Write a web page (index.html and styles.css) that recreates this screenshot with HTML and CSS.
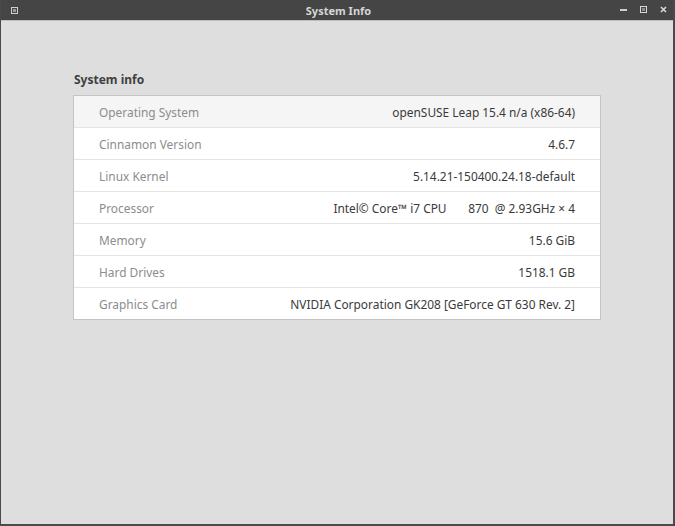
FILE: index.html
```html
<!DOCTYPE html>
<html lang="en">
<head>
    <meta charset="UTF-8">
    <title>System Info</title>
    <link rel="stylesheet" href="styles.css">
</head>
<body>
    <div class="window">
        <div class="titlebar">
            <span class="menu-btn"><svg width="7" height="7" viewBox="0 0 7 7"><rect x="0.5" y="0.5" width="6" height="6" fill="none" stroke="#cfcfcf"/><rect x="2" y="2" width="3" height="3" fill="#9a9a9a"/></svg></span>
            <span class="title">System Info</span>
            <span class="controls">
                <svg width="8" height="8" viewBox="0 0 8 8"><rect x="0" y="3" width="7" height="2" fill="#cfcfcf"/></svg>
                <svg width="8" height="8" viewBox="0 0 8 8"><rect x="0.5" y="0.5" width="6" height="6" fill="none" stroke="#d8d8d8"/><rect x="2" y="2" width="3" height="3" fill="#8a8a8a"/></svg>
                <svg width="8" height="8" viewBox="0 0 8 8"><path d="M1 1 L6 6 M6 1 L1 6" stroke="#d8d8d8" stroke-width="1.6"/></svg>
            </span>
        </div>
        <div class="content">
            <h2>System info</h2>
            <div class="info-table">
                <div class="row selected">
                    <span class="label">Operating System</span>
                    <span class="value">openSUSE Leap 15.4 n/a (x86-64)</span>
                </div>
                <div class="row">
                    <span class="label">Cinnamon Version</span>
                    <span class="value">4.6.7</span>
                </div>
                <div class="row">
                    <span class="label">Linux Kernel</span>
                    <span class="value">5.14.21-150400.24.18-default</span>
                </div>
                <div class="row">
                    <span class="label">Processor</span>
                    <span class="value">Intel© Core™ i7 CPU       870  @ 2.93GHz × 4</span>
                </div>
                <div class="row">
                    <span class="label">Memory</span>
                    <span class="value">15.6 GiB</span>
                </div>
                <div class="row">
                    <span class="label">Hard Drives</span>
                    <span class="value">1518.1 GB</span>
                </div>
                <div class="row">
                    <span class="label">Graphics Card</span>
                    <span class="value">NVIDIA Corporation GK208 [GeForce GT 630 Rev. 2]</span>
                </div>
            </div>
        </div>
    </div>
</body>
</html>
```

FILE: styles.css
```css
html, body {
    margin: 0;
    padding: 0;
}

body {
    font-family: "Noto Sans", "DejaVu Sans", sans-serif;
    background-color: #464646;
}

.window {
    width: 675px;
    height: 526px;
    box-sizing: border-box;
    display: flex;
    flex-direction: column;
    background-color: #454545;
    border-left: 1px solid #4a4a4a;
    border-right: 2px solid #4a4a4a;
    border-bottom: 2px solid #4a4a4a;
}

.titlebar {
    height: 20px;
    display: flex;
    align-items: center;
    position: relative;
    padding: 0 5px 0 10px;
    border-bottom: 1px solid #bdbdbd;
}

.menu-btn {
    display: flex;
}

.title {
    position: absolute;
    left: 3px;
    right: 0;
    text-align: center;
    color: #d6d6d6;
    font-size: 11px;
    font-weight: bold;
}

.controls {
    margin-left: auto;
    display: flex;
    gap: 12px;
    align-items: center;
}

.controls svg {
    display: block;
}

.content {
    flex: 1;
    background-color: #dedede;
    padding: 50px 72px 0 72px;
}

h2 {
    margin: 0 0 7px 1px;
    font-size: 12px;
    font-weight: bold;
    color: #404040;
}

.info-table {
    background-color: white;
    border: 1px solid #c4c4c4;
}

.row {
    height: 31px;
    display: flex;
    align-items: center;
    justify-content: space-between;
    padding: 0 25px;
    border-top: 1px solid #e4e4e4;
    font-size: 11.9px;
}

.row:first-child {
    border-top: none;
}

.row.selected {
    background-color: #f5f5f5;
}

.label {
    color: #8c8c8c;
}

.value {
    color: #3a3a3a;
    white-space: pre;
}
```
